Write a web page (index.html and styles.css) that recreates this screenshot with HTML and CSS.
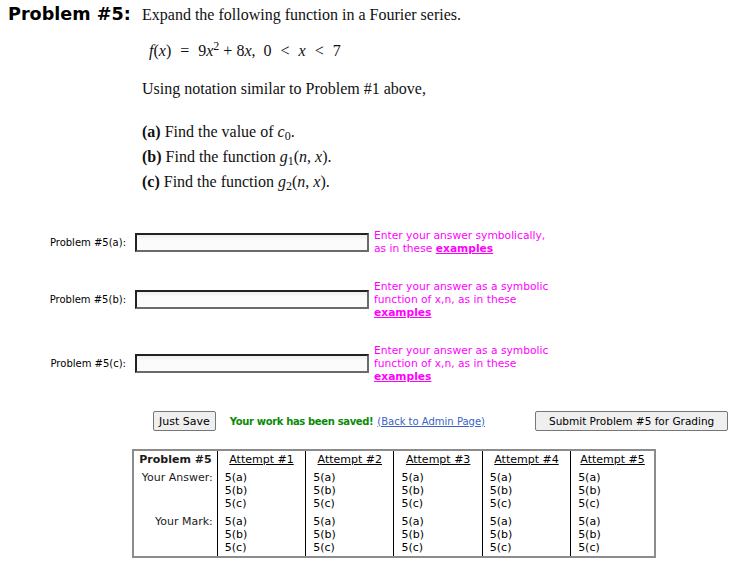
FILE: index.html
```html
<!DOCTYPE html>
<html>
<head>
<meta charset="utf-8">
<link rel="stylesheet" href="styles.css">
</head>
<body>
<div class="problem">
  <div class="title">Problem #5:</div>
  <div class="statement">
    <div class="line first">Expand the following function in a Fourier series.</div>
    <div class="line formula"><i>f</i>(<i>x</i>) <span class="op">=</span> 9<i>x</i><sup>2</sup> + 8<i>x</i>, &nbsp;0 <span class="op">&lt;</span> <i>x</i> <span class="op">&lt;</span> 7</div>
    <div class="line using">Using notation similar to Problem #1 above,</div>
    <div class="line part pa"><b>(a)</b> Find the value of <i>c</i><sub>0</sub>.</div>
    <div class="line part"><b>(b)</b> Find the function <i>g</i><sub>1</sub>(<i>n</i>, <i>x</i>).</div>
    <div class="line part"><b>(c)</b> Find the function <i>g</i><sub>2</sub>(<i>n</i>, <i>x</i>).</div>
  </div>
</div>

<div class="answers">
  <div class="label">Problem #5(a):</div>
  <div class="field"></div>
  <div class="hint">Enter your answer symbolically,<br>as in these <a href="#">examples</a></div>

  <div class="label">Problem #5(b):</div>
  <div class="field"></div>
  <div class="hint">Enter your answer as a symbolic<br>function of x,n, as in these<br><a href="#">examples</a></div>

  <div class="label">Problem #5(c):</div>
  <div class="field"></div>
  <div class="hint">Enter your answer as a symbolic<br>function of x,n, as in these<br><a href="#">examples</a></div>
</div>

<div class="actions">
  <button class="btn">Just Save</button>
  <span class="saved">Your work has been saved!</span>
  <a class="back" href="#">(Back to Admin Page)</a>
  <button class="btn submit">Submit Problem #5 for Grading</button>
</div>

<table class="attempts">
  <colgroup>
    <col class="c0"><col class="ca"><col class="ca"><col class="ca"><col class="ca"><col class="cl">
  </colgroup>
  <tr class="head">
    <th class="rowlabel center">Problem #5</th>
    <td class="center"><u>Attempt #1</u></td>
    <td class="center"><u>Attempt #2</u></td>
    <td class="center"><u>Attempt #3</u></td>
    <td class="center"><u>Attempt #4</u></td>
    <td class="center"><u>Attempt #5</u></td>
  </tr>
  <tr>
    <th class="rowlabel">Your Answer:</th>
    <td>5(a)<br>5(b)<br>5(c)</td>
    <td>5(a)<br>5(b)<br>5(c)</td>
    <td>5(a)<br>5(b)<br>5(c)</td>
    <td>5(a)<br>5(b)<br>5(c)</td>
    <td>5(a)<br>5(b)<br>5(c)</td>
  </tr>
  <tr class="last">
    <th class="rowlabel">Your Mark:</th>
    <td>5(a)<br>5(b)<br>5(c)</td>
    <td>5(a)<br>5(b)<br>5(c)</td>
    <td>5(a)<br>5(b)<br>5(c)</td>
    <td>5(a)<br>5(b)<br>5(c)</td>
    <td>5(a)<br>5(b)<br>5(c)</td>
  </tr>
</table>
</body>
</html>
```

FILE: styles.css
```css
html, body {
  margin: 0;
  padding: 0;
  background: #ffffff;
}

body {
  font-family: "DejaVu Sans", Verdana, sans-serif;
  color: #000;
}

.problem {
  display: flex;
  align-items: baseline;
  padding-top: 4px;
}

.title {
  width: 142px;
  flex-shrink: 0;
  padding-left: 8px;
  box-sizing: border-box;
  font-weight: bold;
  font-size: 17.6px;
}

.statement {
  font-family: "Liberation Serif", "Times New Roman", serif;
  font-size: 16px;
  color: #111;
}

.line {
  line-height: 18px;
}

.formula {
  margin-top: 18px;
  padding-left: 7px;
}

.formula .op {
  padding: 0 5px;
}

.formula sup {
  font-size: 12px;
  line-height: 0;
}

.using {
  margin-top: 20px;
}

.pa {
  margin-top: 25px;
}

.part {
  margin-bottom: 7px;
}

.part sub {
  font-size: 12px;
  line-height: 0;
  vertical-align: -3px;
}

.answers {
  display: grid;
  grid-template-columns: 127px 242px auto;
  row-gap: 25px;
  align-items: center;
  margin-top: 31px;
}

.label {
  font-size: 10px;
  text-align: right;
  padding-right: 1px;
}

.field {
  margin-left: 8px;
  width: 234px;
  height: 19px;
  box-sizing: border-box;
  border-style: solid;
  border-width: 2px;
  border-color: #222 #6a6a6a #6a6a6a #222;
  background: linear-gradient(#eeeeee, #fbfbfb 35%, #fbfbfb);
}

.hint {
  margin-left: 5px;
  font-size: 10.7px;
  line-height: 13px;
  color: #ff00ff;
  white-space: nowrap;
}

.hint a {
  color: #ff00ff;
  font-weight: bold;
}

.actions {
  display: flex;
  align-items: center;
  margin-top: 28px;
  padding-left: 153px;
  font-size: 10px;
  white-space: nowrap;
}

.actions > * {
  flex-shrink: 0;
}

.btn {
  font-family: "DejaVu Sans", Verdana, sans-serif;
  font-size: 11px;
  height: 20px;
  padding: 0 5px;
  background: #efefef;
  border: 1px solid #767676;
  border-radius: 2px;
  color: #000;
}

.saved {
  margin-left: 14px;
  color: #0a8a0a;
  font-weight: bold;
  letter-spacing: -0.35px;
}

.back {
  margin-left: 4px;
  color: #3a62c4;
}

.submit {
  margin-left: 50px;
  padding: 0 13px;
  font-size: 10.5px;
}

.attempts {
  margin-top: 18px;
  margin-left: 132px;
  border-collapse: collapse;
  table-layout: fixed;
  width: 524px;
  border: 2px solid #8c8c8c;
  font-size: 11px;
  line-height: 13px;
}

.c0 { width: 84px; }
.ca { width: 88px; }
.cl { width: 84px; }

.attempts th,
.attempts td {
  padding: 2px 0 3px 7px;
  vertical-align: top;
  text-align: left;
}

.attempts td {
  border-left: 1px solid #000;
}

.attempts .rowlabel {
  font-weight: normal;
  text-align: right;
  padding-right: 4px;
  padding-left: 0;
  color: #1a1a1a;
}

.attempts .head .rowlabel {
  font-weight: bold;
  text-align: center;
  padding: 2px 0 3px 0;
}

.attempts .center {
  text-align: center;
  padding-left: 0;
}

.attempts .last th,
.attempts .last td {
  padding-bottom: 2px;
}
```
